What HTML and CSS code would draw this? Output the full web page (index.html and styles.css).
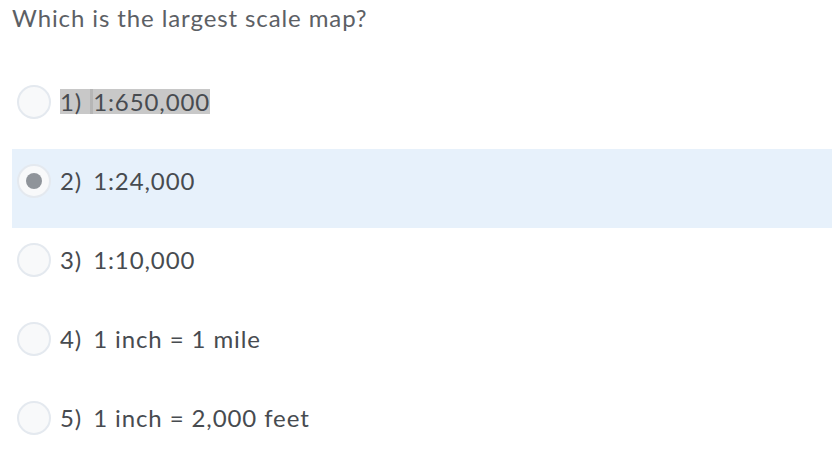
FILE: index.html
```html
<!DOCTYPE html>
<html>
<head>
<meta charset="utf-8">
<link rel="stylesheet" href="styles.css">
</head>
<body>
<div class="quiz">
  <div class="question">Which is the largest scale map?</div>
  <div class="options">
    <div class="option">
      <span class="radio"></span>
      <span class="label"><span class="num sel">1)</span><span class="text sel sel2">1:650,000</span></span>
    </div>
    <div class="option selected">
      <span class="radio"><span class="dot"></span></span>
      <span class="label"><span class="num">2)</span><span class="text">1:24,000</span></span>
    </div>
    <div class="option">
      <span class="radio"></span>
      <span class="label"><span class="num">3)</span><span class="text">1:10,000</span></span>
    </div>
    <div class="option">
      <span class="radio"></span>
      <span class="label"><span class="num">4)</span><span class="text">1 inch = 1 mile</span></span>
    </div>
    <div class="option">
      <span class="radio"></span>
      <span class="label"><span class="num">5)</span><span class="text">1 inch = 2,000 feet</span></span>
    </div>
  </div>
</div>
</body>
</html>
```
FILE: styles.css
```css
html, body {
  margin: 0;
  padding: 0;
  background: #ffffff;
}
body {
  font-family: Lato, "Open Sans", sans-serif;
}
.quiz {
  padding: 0 0 0 12px;
}
.question {
  font-size: 24px;
  letter-spacing: 0.9px;
  color: #5c6065;
  line-height: 30px;
  padding-top: 3px;
  height: 67px;
}
.options {
  display: flex;
  flex-direction: column;
}
.option {
  display: flex;
  align-items: flex-start;
  gap: 9px;
  height: 79px;
  box-sizing: border-box;
  padding: 15px 0 0 5px;
}
.option.selected {
  background: #e7f1fb;
}
.radio {
  width: 34px;
  height: 34px;
  box-sizing: border-box;
  border-radius: 50%;
  border: 2px solid #e4e9ef;
  background: #f8f9fa;
  display: flex;
  align-items: center;
  justify-content: center;
  flex: none;
}
.dot {
  width: 16px;
  height: 16px;
  border-radius: 50%;
  background: #8f949a;
}
.label {
  font-size: 24px;
  letter-spacing: 0.9px;
  color: #474b50;
  line-height: 25px;
  margin-top: 4px;
  display: flex;
  white-space: pre;
}
.num {
  padding-right: 11px;
}
.sel {
  background: #c8c8c8;
}
.sel2 {
  border-left: 3px solid #b6b6b6;
  margin-left: -3px;
}
```
